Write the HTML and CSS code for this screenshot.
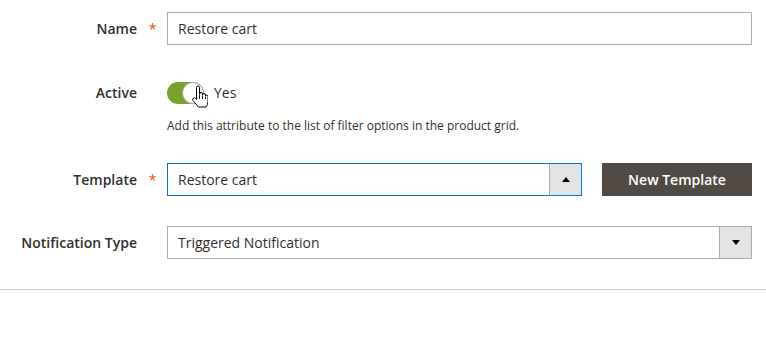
FILE: index.html
```html
<!DOCTYPE html>
<html lang="en">
<head>
  <meta charset="UTF-8">
  <meta name="viewport" content="width=device-width, initial-scale=1.0">
  <title>Edit Follow Up Email</title>
  <link rel="stylesheet" href="styles.css">
</head>
<body>
  <form class="form">
    <div class="field">
      <label class="field-label">Name</label>
      <span class="field-required">*</span>
      <div class="field-control">
        <input class="input-text" type="text" value="Restore cart">
      </div>
    </div>

    <div class="field field-switch">
      <label class="field-label">Active</label>
      <span class="field-required"></span>
      <div class="field-control">
        <div class="switch">
          <span class="switch-track"><span class="switch-knob"></span></span>
          <svg class="cursor" width="17" height="23" viewBox="0 0 17 23">
            <path d="M5.5 2.5a1.5 1.5 0 0 1 3 0V9a1.5 1.5 0 0 1 3 0v1a1.5 1.5 0 0 1 3 0v1a1.3 1.3 0 0 1 2.5 0v5.5q0 3 -2 5.5H7.5L2 15.5q-1-1.5 0.5-2.5q1-0.6 2 0.5L5.5 14.5Z" fill="#fff" stroke="#000" stroke-width="1" stroke-linejoin="round"/>
            <path d="M8.5 9.5V14M11.5 10.5V14M14.5 11.5V14" stroke="#000" stroke-width="1"/>
          </svg>
          <span class="switch-label">Yes</span>
        </div>
      </div>
    </div>
    <div class="field-note">Add this attribute to the list of filter options in the product grid.</div>

    <div class="field field-template">
      <label class="field-label">Template</label>
      <span class="field-required">*</span>
      <div class="field-control control-inline">
        <div class="select select-open">
          <span class="select-value">Restore cart</span>
          <span class="select-arrow"><span class="arrow-up"></span></span>
        </div>
        <button type="button" class="action-secondary">New Template</button>
      </div>
    </div>

    <div class="field field-type">
      <label class="field-label">Notification Type</label>
      <span class="field-required"></span>
      <div class="field-control">
        <div class="select">
          <span class="select-value">Triggered Notification</span>
          <span class="select-arrow"><span class="arrow-down"></span></span>
        </div>
      </div>
    </div>
  </form>
  <hr class="divider">
</body>
</html>
```

FILE: styles.css
```css
body {
  margin: 0;
  background: #fff;
  color: #303030;
  font-family: 'Open Sans', 'Liberation Sans', sans-serif;
  font-size: 14px;
}
.form {
  padding: 12px 14px 0 0;
}
.field {
  display: flex;
  align-items: center;
  height: 33px;
}
.field-label {
  width: 137px;
  text-align: right;
  font-weight: 600;
  font-size: 14px;
}
.field-required {
  width: 30px;
  text-align: center;
  color: #eb5202;
  font-size: 14px;
  padding-left: 1px;
  box-sizing: border-box;
}
.field-control {
  flex: 1;
  display: flex;
  align-items: center;
  height: 100%;
}
.input-text {
  width: 100%;
  height: 33px;
  box-sizing: border-box;
  border: 1px solid #adadad;
  padding: 0 10px;
  font-family: inherit;
  font-size: 14px;
  color: #303030;
  outline: none;
}
.field-switch {
  margin-top: 31px;
}
.switch {
  position: relative;
  display: flex;
  align-items: center;
}
.switch-track {
  position: relative;
  display: block;
  width: 37px;
  height: 22px;
  border-radius: 12px;
  background: #79a22e;
}
.switch-knob {
  position: absolute;
  right: 0;
  top: 0;
  width: 22px;
  height: 22px;
  box-sizing: border-box;
  border-radius: 50%;
  background: #fff;
  border: 1px solid #adadad;
}
.cursor {
  position: absolute;
  left: 24px;
  top: 3px;
}
.switch-label {
  margin-left: 10px;
  font-size: 14px;
}
.field-note {
  margin: 9px 0 0 167px;
  font-size: 12px;
  line-height: 16px;
}
.field-template {
  margin-top: 29px;
}
.field-type {
  margin-top: 30px;
}
.control-inline {
  gap: 20px;
}
.select {
  flex: 1;
  display: flex;
  height: 33px;
  box-sizing: border-box;
  border: 1px solid #adadad;
}
.select-open {
  border-color: #007bdb;
}
.select-value {
  flex: 1;
  padding-left: 10px;
  line-height: 31px;
}
.select-arrow {
  width: 31px;
  display: flex;
  align-items: center;
  justify-content: center;
  background: #e3e3e3;
  border-left: 1px solid #adadad;
}
.arrow-up,
.arrow-down {
  width: 0;
  height: 0;
  border-left: 4px solid transparent;
  border-right: 4px solid transparent;
}
.arrow-up {
  border-bottom: 5px solid #000;
}
.arrow-down {
  border-top: 5px solid #000;
}
.action-secondary {
  width: 150px;
  height: 33px;
  border: none;
  background: #514943;
  color: #fff;
  font-family: inherit;
  font-size: 14px;
  font-weight: 600;
  cursor: pointer;
}
.divider {
  margin: 30px 0 0;
  border: none;
  border-top: 1px solid #ccc;
}
```
